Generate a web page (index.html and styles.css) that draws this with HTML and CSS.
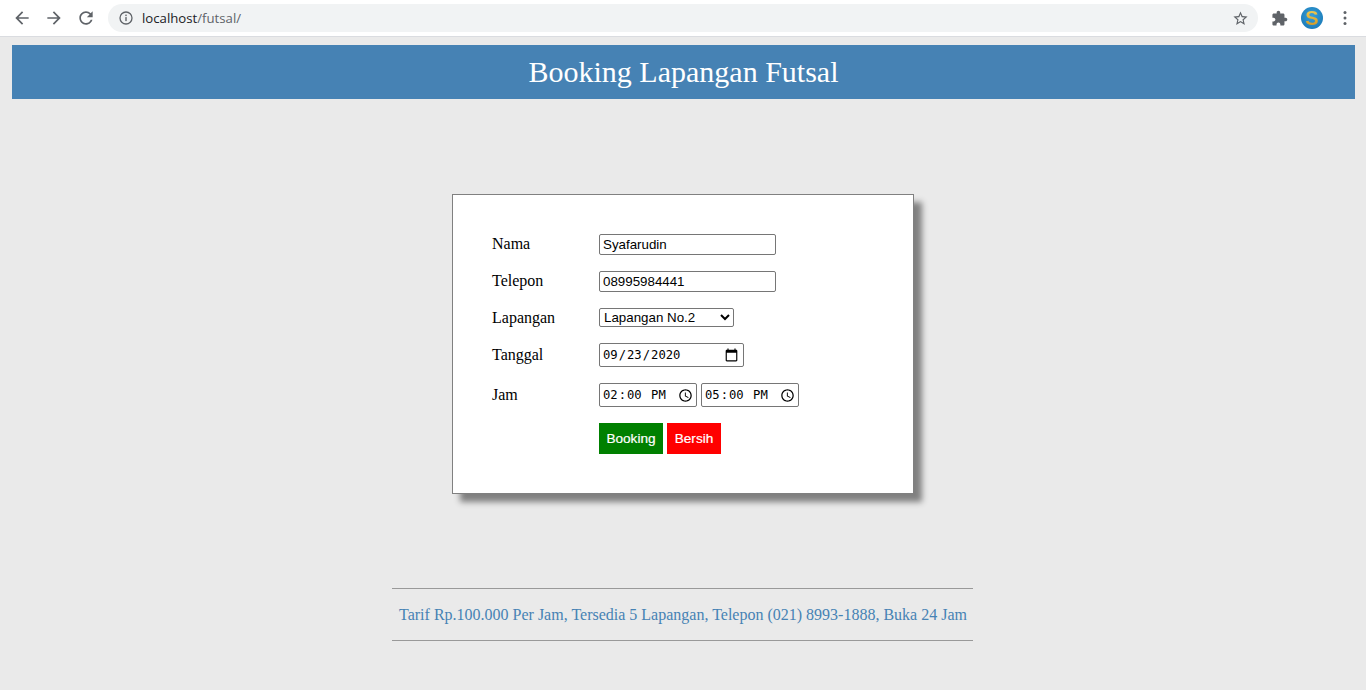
FILE: index.html
```html
<!DOCTYPE html>
<html>
  <head>
    <title>Booking Lapangan Futsal</title>
    <link rel="stylesheet" href="styles.css">
  </head>
  <body>
    <div class="toolbar">
      <svg class="tool-icon" viewBox="0 0 24 24"><path d="M20 11H7.83l5.59-5.59L12 4l-8 8 8 8 1.41-1.41L7.83 13H20v-2z"/></svg>
      <svg class="tool-icon" viewBox="0 0 24 24"><path d="M12 4l-1.41 1.41L16.17 11H4v2h12.17l-5.58 5.59L12 20l8-8z"/></svg>
      <svg class="tool-icon" viewBox="0 0 24 24"><path d="M17.65 6.35C16.2 4.9 14.21 4 12 4c-4.42 0-7.99 3.58-7.99 8s3.57 8 7.99 8c3.73 0 6.84-2.55 7.73-6h-2.08c-.82 2.33-3.04 4-5.65 4-3.31 0-6-2.69-6-6s2.69-6 6-6c1.66 0 3.14.69 4.22 1.78L13 11h7V4l-2.35 2.35z"/></svg>
      <div class="omnibox">
        <svg class="info-icon" viewBox="0 0 14 14"><circle cx="7" cy="7" r="6" fill="none" stroke="#5f6368" stroke-width="1.3"/><rect x="6.3" y="6.1" width="1.4" height="4" fill="#5f6368"/><rect x="6.3" y="3.6" width="1.4" height="1.5" fill="#5f6368"/></svg>
        <span class="url">localhost<span class="url-path">/futsal/</span></span>
        <svg class="star-icon" viewBox="0 0 24 24"><path d="M22 9.24l-7.19-.62L12 2 9.19 8.63 2 9.24l5.46 4.73L5.82 21 12 17.27 18.18 21l-1.63-7.03L22 9.24zM12 15.4l-3.76 2.27 1-4.28-3.32-2.88 4.38-.38L12 6.1l1.71 4.04 4.38.38-3.32 2.88 1 4.28L12 15.4z"/></svg>
      </div>
      <svg class="puzzle-icon" viewBox="0 0 24 24"><path d="M20.5 11H19V7c0-1.1-.9-2-2-2h-4V3.5C13 2.12 11.88 1 10.5 1S8 2.12 8 3.5V5H4c-1.1 0-1.99.9-1.99 2v3.8H3.5c1.49 0 2.7 1.21 2.7 2.7s-1.21 2.7-2.7 2.7H2V20c0 1.1.9 2 2 2h3.8v-1.5c0-1.49 1.21-2.7 2.7-2.7 1.49 0 2.7 1.21 2.7 2.7V22H17c1.1 0 2-.9 2-2v-4h1.5c1.38 0 2.5-1.12 2.5-2.5S21.88 11 20.5 11z"/></svg>
      <div class="avatar"><span class="avatar-letter">S</span></div>
      <svg class="dots-icon" viewBox="0 0 4 16"><circle cx="2" cy="2.5" r="1.5"/><circle cx="2" cy="8" r="1.5"/><circle cx="2" cy="13.5" r="1.5"/></svg>
    </div>

    <div class="page">
      <div class="header">Booking Lapangan Futsal</div>

      <form class="card">
        <div class="row row-text">
          <label>Nama</label>
          <input type="text" class="text-input" value="Syafarudin">
        </div>
        <div class="row row-text">
          <label>Telepon</label>
          <input type="text" class="text-input" value="08995984441">
        </div>
        <div class="row">
          <label>Lapangan</label>
          <select class="field-select">
            <option>Lapangan No.2</option>
          </select>
        </div>
        <div class="row">
          <label>Tanggal</label>
          <input type="date" class="date-input" value="2020-09-23">
        </div>
        <div class="row">
          <label>Jam</label>
          <input type="time" class="time-input" value="14:00">
          <input type="time" class="time-input" value="17:00">
        </div>
        <div class="row">
          <label></label>
          <button type="button" class="btn btn-booking">Booking</button>
          <button type="button" class="btn btn-clear">Bersih</button>
        </div>
      </form>

      <div class="footer">Tarif Rp.100.000 Per Jam, Tersedia 5 Lapangan, Telepon (021) 8993-1888, Buka 24 Jam</div>
    </div>
  </body>
</html>
```

FILE: styles.css
```css
html, body {
  margin: 0;
  height: 100%;
  overflow: hidden;
}
body {
  background: #eaeaea;
  font-family: "Liberation Serif", serif;
  font-size: 16px;
  color: #000;
}

/* browser bar */
.toolbar {
  display: flex;
  align-items: center;
  height: 36px;
  padding-left: 12px;
  background: #fff;
  border-bottom: 1px solid #dadce0;
}
.tool-icon {
  width: 20px;
  height: 20px;
  margin-right: 12px;
  fill: #5f6368;
}
.omnibox {
  display: flex;
  align-items: center;
  width: 1150px;
  height: 28px;
  border-radius: 14px;
  background: #f1f3f4;
}
.info-icon {
  width: 14px;
  height: 14px;
  margin-left: 11px;
}
.url {
  margin-left: 9px;
  font-family: "Open Sans", sans-serif;
  font-size: 13.2px;
  color: #202124;
}
.url-path {
  color: #5f6368;
}
.star-icon {
  width: 17px;
  height: 17px;
  margin-left: auto;
  margin-right: 9px;
  fill: #5f6368;
}
.puzzle-icon {
  width: 17px;
  height: 17px;
  margin-left: 13px;
  fill: #5f6368;
}
.avatar {
  width: 22px;
  height: 22px;
  margin-left: 13px;
  border-radius: 50%;
  background: radial-gradient(circle at 50% 40%, #35a0dc, #1570ad);
  font-family: "Liberation Sans", sans-serif;
  font-size: 20px;
  font-weight: bold;
  line-height: 22px;
  text-align: center;
}
.avatar-letter {
  background: linear-gradient(#f3d45c, #c98f1e);
  -webkit-background-clip: text;
  background-clip: text;
  color: transparent;
}
.dots-icon {
  width: 4px;
  height: 16px;
  margin-left: 20px;
  fill: #5f6368;
}

/* page */
.page {
  padding: 8px 11px 0 12px;
}
.header {
  height: 54px;
  background: steelblue;
  color: #fff;
  font-size: 30px;
  line-height: 54px;
  text-align: center;
}
.card {
  display: flex;
  flex-direction: column;
  gap: 16px;
  box-sizing: border-box;
  width: 462px;
  height: 300px;
  margin: 95px 0 0 440px;
  padding: 39px;
  background: #fff;
  border: 1px solid gray;
  box-shadow: 8px 8px 6px gray;
}
.row {
  display: flex;
  align-items: center;
  gap: 4px;
}
.row label {
  width: 103px;
}
.row-text label {
  padding-bottom: 1px;
}
.text-input, .field-select, .date-input, .time-input {
  box-sizing: border-box;
  margin: 0;
  font-size: 13.33px;
  background: #fff;
  border: 1px solid #767676;
  border-radius: 2px;
}
.text-input {
  width: 177px;
  height: 21px;
  padding: 1px 3px;
  font-family: "Liberation Sans", sans-serif;
}
.field-select {
  width: 135px;
  height: 19px;
  font-family: "Liberation Sans", sans-serif;
}
.date-input, .time-input {
  height: 24px;
  padding: 1px 2px;
  font-family: "DejaVu Sans Mono", monospace;
  font-size: 12.2px;
}
.date-input {
  width: 145px;
  padding-right: 4px;
}
.time-input {
  width: 98px;
  padding-right: 3px;
}
.date-input::-webkit-calendar-picker-indicator {
  width: 15px;
  height: 15px;
  margin: 0;
  padding: 0;
}
.time-input::-webkit-calendar-picker-indicator {
  width: 15px;
  height: 15px;
  margin: 0;
  padding: 0;
}
.btn {
  height: 31px;
  border: none;
  padding: 0 0 1px;
  color: #fff;
  font-family: "Liberation Sans", sans-serif;
  font-size: 13.6px;
  -webkit-text-stroke: 0.2px #fff;
}
.btn-booking {
  width: 64px;
  background: green;
}
.btn-clear {
  width: 54px;
  background: red;
}
.footer {
  box-sizing: border-box;
  width: 581px;
  height: 53px;
  margin: 94px 0 0 380px;
  padding-left: 1px;
  border-top: 1px solid #999;
  border-bottom: 1px solid #999;
  color: steelblue;
  line-height: 51px;
  text-align: center;
  white-space: nowrap;
}
```
